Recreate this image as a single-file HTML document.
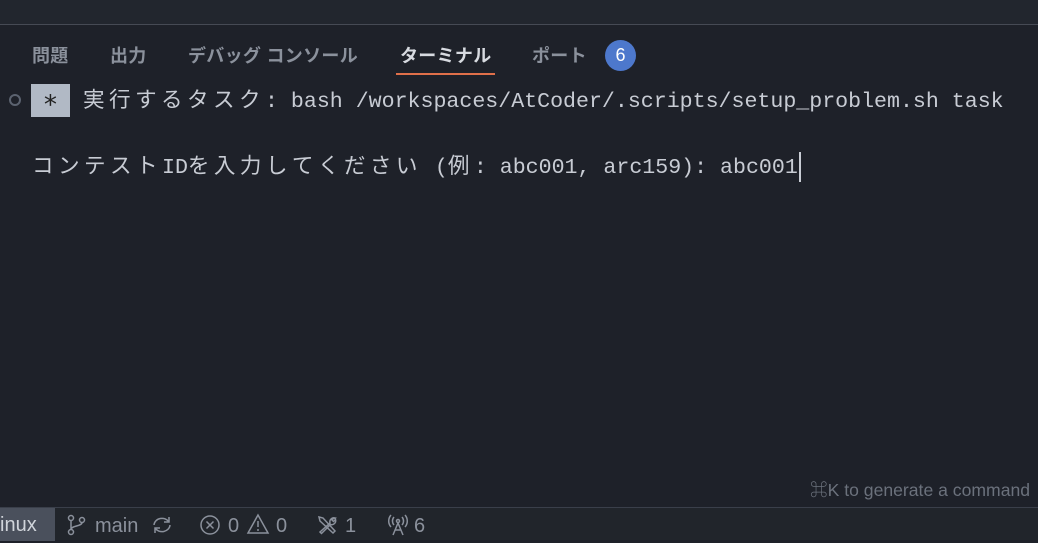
<!DOCTYPE html>
<html><head><meta charset="utf-8"><style>
*{margin:0;padding:0;box-sizing:border-box}
body{width:1038px;height:540px;overflow:hidden;background:#1e2129;position:relative;font-family:"Liberation Sans","Noto Sans CJK JP",sans-serif}
.top{position:absolute;left:0;top:0;width:1038px;height:25px;background:#22262e;border-bottom:1px solid #464a54}
.tab{position:absolute;top:42px;font-size:18px;color:#8b919c;font-weight:bold;letter-spacing:0.3px;white-space:nowrap}
.tab.a{color:#d7dae0}
.ul{position:absolute;left:396px;top:73px;width:99px;height:2px;background:#e0704a}
.badge{position:absolute;left:605px;top:40px;width:31px;height:31px;border-radius:50%;background:#4d78cc;color:#fff;font-size:18px;text-align:center;line-height:31px}
.term{position:absolute;font-family:"Liberation Mono","Noto Sans CJK JP",monospace;font-size:21.6px;color:#c8ccd4;white-space:pre;line-height:30px}
.j{display:inline-block;width:26px;text-align:left}
.star{position:absolute;left:31px;top:84px;width:39px;height:33px;background:#b1b9c5;color:#222;font-family:"DejaVu Sans Mono",monospace;font-size:26px;text-align:center;line-height:33px}
.circ{position:absolute;left:9px;top:94px;width:12px;height:12px;border:2px solid #5c6370;border-radius:50%}
.cursor{position:absolute;left:799px;top:152px;width:2px;height:30px;background:#c8ccd4}
.hint{position:absolute;left:810px;top:477px;font-size:17.6px;color:#6b717c;white-space:nowrap}
.sb{position:absolute;left:0;top:507px;width:1038px;height:33px;background:#21252b;border-top:1px solid #3a3f4a;color:#8b919c;font-size:20px}
.sb span{position:absolute;top:7px;white-space:nowrap}
.rem{position:absolute;left:0;top:0;width:55px;height:33px;background:#4a505c;color:#d0d4da;font-size:20px;line-height:35px}
</style></head><body>
<div class="top"></div>
<div class="tab" style="left:32px">問題</div>
<div class="tab" style="left:110px">出力</div>
<div class="tab" style="left:188px">デバッグ コンソール</div>
<div class="tab a" style="left:400px">ターミナル</div>
<div class="tab" style="left:532px">ポート</div>
<div class="ul"></div>
<div class="badge">6</div>
<div class="circ"></div>
<div class="star">∗</div>
<div class="term" style="left:83px;top:87px"><span class="j">実</span><span class="j">行</span><span class="j">す</span><span class="j">る</span><span class="j">タ</span><span class="j">ス</span><span class="j">ク</span>: bash /workspaces/AtCoder/.scripts/setup_problem.sh task</div>
<div class="term" style="left:32px;top:153px"><span class="j">コ</span><span class="j">ン</span><span class="j">テ</span><span class="j">ス</span><span class="j">ト</span>ID<span class="j">を</span><span class="j">入</span><span class="j">力</span><span class="j">し</span><span class="j">て</span><span class="j">く</span><span class="j">だ</span><span class="j">さ</span><span class="j">い</span> (<span class="j">例</span>: abc001, arc159): abc001</div>
<div class="cursor"></div>
<div class="hint">⌘K to generate a command</div>
<div class="sb">
<div class="rem">inux</div>
<svg style="position:absolute;left:66px;top:6px" width="22" height="22" viewBox="0 0 22 22" fill="none" stroke="#8b919c" stroke-width="1.5"><circle cx="5" cy="4" r="2.5"/><circle cx="5" cy="18" r="2.5"/><circle cx="16" cy="6" r="2.5"/><path d="M5 6.5v9M16 8.5c0 4-11 3-11 7"/></svg>
<span style="left:95px">main</span>
<svg style="position:absolute;left:150px;top:6px" width="24" height="22" viewBox="0 0 24 22" fill="none" stroke="#8b919c" stroke-width="1.5"><path d="M4 11a8 7 0 0 1 15-3M20 11a8 7 0 0 1-15 3"/><path d="M19 3v5h-5M5 19v-5h5"/></svg>
<svg style="position:absolute;left:199px;top:6px" width="22" height="22" viewBox="0 0 22 22" fill="none" stroke="#8b919c" stroke-width="1.5"><circle cx="11" cy="11" r="9"/><path d="M7.5 7.5l7 7M14.5 7.5l-7 7"/></svg>
<span style="left:228px">0</span>
<svg style="position:absolute;left:246px;top:5px" width="24" height="22" viewBox="0 0 24 22" fill="none" stroke="#8b919c" stroke-width="1.5"><path d="M12 2L2 20h20z"/><path d="M12 8v6M12 16v2"/></svg>
<span style="left:276px">0</span>
<svg style="position:absolute;left:316px;top:6px" width="24" height="22" viewBox="0 0 24 22" fill="none" stroke="#8b919c" stroke-width="1.5"><path d="M3 3l4 1 12 13-2 2L4 7z"/><path d="M19 4a4 4 0 0 0-5 5L4 18l1.5 1.5 9-9a4 4 0 0 0 5-5l-2 2-2-2z"/></svg>
<span style="left:345px">1</span>
<svg style="position:absolute;left:386px;top:5px" width="24" height="24" viewBox="0 0 24 24" fill="none" stroke="#8b919c" stroke-width="1.5"><circle cx="12" cy="8" r="1.5"/><path d="M12 10L7 22M12 10l5 12M9 17h6M8 4a6 6 0 0 0 0 8M16 4a6 6 0 0 1 0 8M5 2a9 9 0 0 0 0 12M19 2a9 9 0 0 1 0 12"/></svg>
<span style="left:414px">6</span>
</div>
</body></html>
